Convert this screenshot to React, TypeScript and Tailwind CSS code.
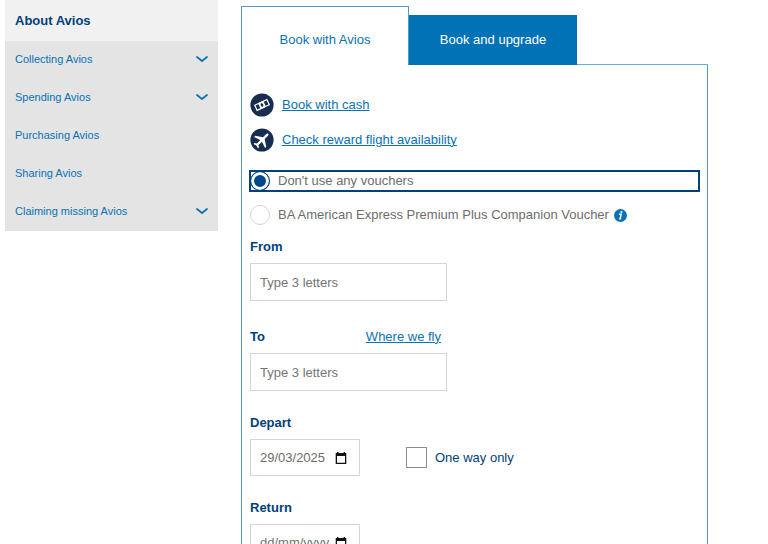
import { useState } from "react";

const menuItems = [
  { label: "Collecting Avios", expandable: true },
  { label: "Spending Avios", expandable: true },
  { label: "Purchasing Avios", expandable: false },
  { label: "Sharing Avios", expandable: false },
  { label: "Claiming missing Avios", expandable: true },
];

const vouchers = [
  { value: "none", label: "Don't use any vouchers", info: false },
  { value: "amex", label: "BA American Express Premium Plus Companion Voucher", info: true },
];

const linkClass = "text-[#0972b4] underline underline-offset-1 decoration-1";

const ChevronIcon = () => (
  <svg className="w-3 h-2" viewBox="0 0 12 8" fill="none" stroke="currentColor" strokeWidth={1.7} strokeLinecap="round" strokeLinejoin="round">
    <path d="M1 2L6 6L11 2" />
  </svg>
);

const CashIcon = () => (
  <svg className="w-6 h-6 shrink-0" viewBox="0 0 24 24">
    <circle cx="12" cy="12" r="11.6" fill="#172d4f" />
    <g transform="rotate(-25 12 12)" fill="none" stroke="#fff" strokeWidth="1.2">
      <rect x="5.300" y="9.200" width="13.400" height="5.600" />
      <rect x="9.100" y="8.600" width="5.800" height="6.800" fill="#fff" stroke="none" />
      <ellipse cx="12" cy="12" rx="1.300" ry="1.800" fill="#172d4f" stroke="none" />
    </g>
  </svg>
);

const PlaneIcon = () => (
  <svg className="w-6 h-6 shrink-0" viewBox="0 0 24 24">
    <circle cx="12" cy="12" r="11.6" fill="#172d4f" />
    <path
      transform="translate(12 12) rotate(45) scale(0.86) translate(-12 -12)"
      fill="#fff"
      d="M21 16v-2l-7.6-5V3.5C13.4 2.5 12.8 1.7 12 1.7s-1.4.8-1.4 1.8V9L3 14v2l7.6-2.5V19L8.3 20.8v1.5L12 21.2l3.7 1.1v-1.5L13.4 19v-5.5z"
    />
  </svg>
);

const InfoIcon = () => (
  <svg className="w-[13px] h-[13px]" viewBox="0 0 13 13">
    <circle cx="6.5" cy="6.5" r="6.5" fill="#0972b4" />
    <circle cx="7.4" cy="3.1" r="1.1" fill="#fff" />
    <path d="M5 5.3H7.2L6.2 9.6M4.9 9.9H7.2" fill="none" stroke="#fff" strokeWidth="1.4" />
  </svg>
);

const CalendarIcon = () => (
  <svg className="w-3 h-3" viewBox="0 0 12 12">
    <path fill="#111" fillRule="evenodd" d="M2 0h1.4v1h5.2V0H10v1h1.300v11H.7V1H2zM2 4v6.700h8V4z" />
  </svg>
);

interface AirportFieldProps {
  id: string;
  label: string;
  link?: string;
}

const AirportField = ({ id, label, link }: AirportFieldProps) => (
  <div className="w-[197px]">
    <div className="flex items-center justify-between pr-[6px]">
      <label htmlFor={id} className="font-bold text-[#00417c]">
        {label}
      </label>
      {link && (
        <a href="#where-we-fly" className={linkClass}>
          {link}
        </a>
      )}
    </div>
    <input
      type="text"
      id={id}
      placeholder="Type 3 letters"
      className="mt-[6px] block h-[38px] w-full border border-[#d5d5d5] bg-white px-[9px] text-[#6d6d6d] placeholder:text-[#757575] outline-none"
    />
  </div>
);

interface DateFieldProps {
  id: string;
  label: string;
  initialValue?: string;
}

const DateField = ({ id, label, initialValue = "" }: DateFieldProps) => {
  const [value, setValue] = useState(initialValue);

  return (
    <div className="w-[110px]">
      <label htmlFor={id} className="block font-bold text-[#00417c]">
        {label}
      </label>
      <div className="mt-[6px] flex h-[37px] items-center border border-[#d5d5d5] bg-white pl-[9px] pr-3">
        <input
          type="text"
          id={id}
          value={value}
          placeholder="dd/mm/yyyy"
          onChange={(e) => setValue(e.target.value)}
          className="w-0 flex-1 text-[#6d6d6d] placeholder:text-[#757575] outline-none"
        />
        <button type="button" aria-label={`Choose ${label} date`}>
          <CalendarIcon />
        </button>
      </div>
    </div>
  );
};

const Sidebar = () => (
  <nav className="w-[213px] shrink-0">
    <h2 className="flex h-[41px] items-center bg-[#f1f1f1] px-[10px] font-bold text-[#00417c]">About Avios</h2>
    <ul className="bg-[#e4e4e4] text-[11px] text-[#0972b4]">
      {menuItems.map((item) => (
        <li key={item.label}>
          <a href="#menu" className="flex h-[38px] items-center justify-between px-[10px] pb-[2px]">
            {item.label}
            {item.expandable && <ChevronIcon />}
          </a>
        </li>
      ))}
    </ul>
  </nav>
);

const App = () => {
  const [voucher, setVoucher] = useState("none");

  return (
    <div className="flex items-start gap-[23px] bg-white pl-[5px] pr-[60px] text-[13px] leading-5 font-['Liberation_Sans',Arial,sans-serif]">
      <Sidebar />
      <main className="min-w-0 flex-1 pt-[6px]">
        <div className="flex items-end" role="tablist">
          <button type="button" role="tab" aria-selected="true" className="h-[59px] w-[168px] border-x border-t border-[#4f9acb] pb-[2px] pt-[10px] text-[#0972b4]">
            Book with Avios
          </button>
          <button type="button" role="tab" aria-selected="false" className="h-[50px] w-[168px] bg-[#0072b5] text-white">
            Book and upgrade
          </button>
          <div className="flex-1 border-b border-[#6aabd4]" />
        </div>

        <form className="border-x border-[#4f9acb] pb-8 px-[8px] pt-[28px]">
          <div className="flex flex-col gap-[11px]">
            <div className="flex items-center gap-2">
              <CashIcon />
              <a href="#cash" className={linkClass}>Book with cash</a>
            </div>
            <div className="flex items-center gap-2">
              <PlaneIcon />
              <a href="#rewards" className={linkClass}>Check reward flight availability</a>
            </div>
          </div>

          <div className="mt-[19px] flex flex-col gap-[14px]">
            {vouchers.map((option) => (
              <label
                key={option.value}
                className="flex h-5 items-center gap-2 text-[#6d6d6d] has-checked:outline-2 has-checked:-outline-offset-1 has-checked:outline-[#00417c]"
              >
                <input
                  type="radio"
                  name="voucher"
                  value={option.value}
                  checked={voucher === option.value}
                  onChange={() => setVoucher(option.value)}
                  className="h-5 w-5 shrink-0 appearance-none rounded-full border border-[#d5d5d5] bg-white outline-none checked:border-[#00417c] checked:bg-[#00488a] checked:shadow-[inset_0_0_0_3px_white]"
                />
                <span>{option.label}</span>
                {option.info && (
                  <button type="button" aria-label="Voucher information" className="-ml-[3px]">
                    <InfoIcon />
                  </button>
                )}
              </label>
            ))}
          </div>

          <div className="mt-[12px] flex flex-col gap-[26px]">
            <AirportField id="from" label="From" />
            <AirportField id="to" label="To" link="Where we fly" />
          </div>

          <div className="mt-[22px] flex items-end gap-[46px]">
            <DateField id="depart" label="Depart" initialValue="29/03/2025" />
            <label className="flex items-center gap-2 pb-[8px] text-[#00417c]">
              <input type="checkbox" className="h-[21px] w-[21px] appearance-none border border-[#8b8b94] bg-white checked:bg-[#00417c]" />
              One way only
            </label>
          </div>

          <div className="mt-[22px]">
            <DateField id="return" label="Return" />
          </div>
        </form>
      </main>
    </div>
  );
};

export default App;
